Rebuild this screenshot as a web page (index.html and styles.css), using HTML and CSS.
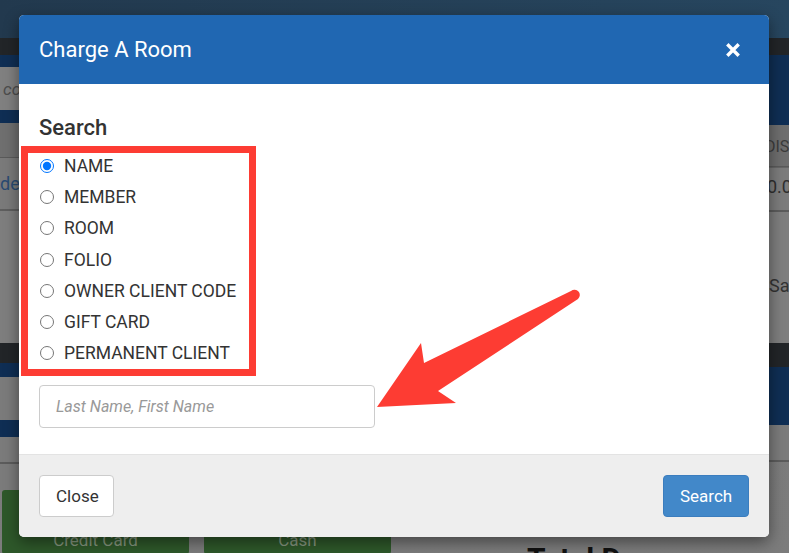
FILE: index.html
```html
<!DOCTYPE html>
<html lang="en">
<head>
<meta charset="utf-8">
<title>Charge A Room</title>
<link rel="stylesheet" href="styles.css">
</head>
<body>
<div class="page">
  <div class="topbar"></div>
  <div class="panels">
    <div class="panel left">
      <div class="bar dark h17"></div>
      <div class="bar blue h12"></div>
      <div class="row-input"><span class="ph">co</span></div>
      <div class="bar blue h13"></div>
      <div class="thead"></div>
      <div class="trow"><span class="link">de</span></div>
      <div class="spacer h132"></div>
      <div class="bar dark h20"></div>
      <div class="bar blue h14"></div>
      <div class="bar gray h43"></div>
      <div class="bar blue h17"></div>
      <div class="bar gray h25 lined"></div>
      <div class="bar gray h26"></div>
      <div class="paybtns">
        <div class="pay">Credit Card</div>
        <div class="pay">Cash</div>
      </div>
    </div>
    <div class="panel right">
      <div class="bar dark h17"></div>
      <div class="bar blue h70"></div>
      <div class="rhead">DISC</div>
      <div class="rrow">0.0</div>
      <div class="rsale">Sal</div>
      <div class="bar dark h24"></div>
      <div class="bar blue h58"></div>
      <div class="bar gray h37 lined"></div>
      <div class="total">Total D</div>
    </div>
  </div>
</div>

<div class="modal">
  <div class="modal-header">
    <h3 class="modal-title">Charge A Room</h3>
    <button class="close" type="button" aria-label="Close">
      <svg width="14" height="14" viewBox="0 0 14 14"><path d="M2.5 2.5 L11.5 11.5 M11.5 2.5 L2.5 11.5" stroke="#fff" stroke-width="3.4" stroke-linecap="square"/></svg>
    </button>
  </div>
  <div class="modal-body">
    <h4 class="search-title">Search</h4>
    <div class="options">
      <label class="opt first"><input type="radio" name="t" checked><span>NAME</span></label>
      <label class="opt"><input type="radio" name="t"><span>MEMBER</span></label>
      <label class="opt"><input type="radio" name="t"><span>ROOM</span></label>
      <label class="opt"><input type="radio" name="t"><span>FOLIO</span></label>
      <label class="opt"><input type="radio" name="t"><span>OWNER CLIENT CODE</span></label>
      <label class="opt"><input type="radio" name="t"><span>GIFT CARD</span></label>
      <label class="opt"><input type="radio" name="t"><span>PERMANENT CLIENT</span></label>
    </div>
    <input class="query" type="text" placeholder="Last Name, First Name">
  </div>
  <div class="modal-footer">
    <button class="btn btn-default" type="button">Close</button>
    <button class="btn btn-primary" type="button">Search</button>
  </div>
</div>

<svg class="arrow" width="789" height="553" viewBox="0 0 789 553">
  <path d="M377 407 L421 343 L424 363 L571 291 A5 5 0 0 1 578 299 L438 391 L456 403 Z" fill="#fd3c33"/>
</svg>
</body>
</html>
```

FILE: styles.css
```css
* { box-sizing: border-box; }
html, body { margin: 0; padding: 0; }
body {
  width: 789px;
  height: 553px;
  overflow: hidden;
  font-family: Roboto, "Liberation Sans", Arial, sans-serif;
  background: #787878;
  position: relative;
}
.page { width: 789px; height: 553px; overflow: hidden; }
.topbar { height: 38px; background: linear-gradient(90deg, #22394e, #27465f); }
.panels { display: grid; grid-template-columns: 395px 1fr; height: 515px; }
.panel { display: flex; flex-direction: column; background: linear-gradient(180deg, #7a7a7a, #7c7c7c); }
.bar { flex: none; }
.dark { background: #222528; }
.blue { background: #0f2e54; }
.gray { background: #7b7b7b; }
.lined { border-bottom: 2px solid #5c5c5c; }
.h12 { height: 12px; } .h13 { height: 13px; } .h14 { height: 14px; } .h17 { height: 17px; }
.h20 { height: 20px; } .h24 { height: 24px; } .h25 { height: 27px; } .h26 { height: 26px; }
.h37 { height: 37px; } .h43 { height: 43px; } .h58 { height: 58px; } .h70 { height: 70px; }
.h132 { height: 132px; }
.spacer { background: #7e7e7e; }
.row-input { height: 43px; background: #808080; padding-left: 3px; display: flex; align-items: center; }
.ph { font-style: italic; color: #4d4d4d; font-size: 17px; }
.thead { height: 35px; background: #6f6f6f; border-bottom: 1px solid #5a5a5a; }
.trow { height: 53px; background: #7a7a7a; border-bottom: 2px solid #5e5e5e; display: flex; align-items: center; }
.link { color: #2a4b72; font-size: 18px; }
.paybtns { display: flex; gap: 15px; padding-left: 2px; margin-top: 0; }
.pay {
  width: 187px; height: 64px; background: #2e582a; border-radius: 3px;
  color: #86967f; font-size: 17px; text-align: center; padding-top: 40px;
}
.right .rhead { height: 42px; background: #6e6e6e; border-bottom: 1px solid #5a5a5a; color: #3c3c3c; font-size: 16px; padding: 12px 0 0 370px; white-space: nowrap; }
.right .rrow { height: 45px; background: #7c7c7c; border-top: 1px solid #666; border-bottom: 2px solid #5c5c5c; color: #2f2f2f; font-size: 18px; padding: 8px 0 0 372px; white-space: nowrap; }
.right .rsale { height: 131px; background: #7e7e7e; color: #333; font-size: 18px; padding: 63px 0 0 374px; white-space: nowrap; }
.total { font-size: 30px; line-height: 34px; font-weight: 700; color: #111; padding: 80px 0 0 132px; white-space: nowrap; }

/* modal */
.modal {
  position: absolute; left: 19px; top: 15px; width: 750px;
  background: #fff; border-radius: 5px; overflow: hidden;
  box-shadow: 0 5px 15px rgba(0,0,0,0.45);
}
.modal-header {
  height: 69px; background: #2067b2; display: flex; align-items: center;
  justify-content: space-between; padding: 0 29px 0 20px;
}
.modal-title { margin: 0; color: #fff; font-weight: 400; font-size: 22px; line-height: 26px; }
.close { border: 0; background: transparent; padding: 0; margin: 0; width: 14px; height: 14px; display: flex; cursor: pointer; }
.modal-body { padding: 32px 20px 26px; }
.search-title { margin: 0; font-size: 22px; line-height: 24px; font-weight: 500; color: #333; }
.options {
  margin: 6px 0 0 -18px; width: 235px; height: 230px;
  border: 7px solid #fd3c33; padding-left: 12px;
}
.opt { display: flex; align-items: center; height: 31.17px; font-size: 17.5px; color: #333; }
.opt.first { margin-top: -2.5px; }
.opt input { margin: 0 10px 0 0; width: 14px; height: 14px; flex: none; }
.query {
  display: block; margin-top: 9px; width: 336px; height: 43px;
  border: 1px solid #ccc; border-radius: 4px; padding: 0 16px;
  font-family: inherit; font-size: 16px; color: #555;
}
.query::placeholder { color: #999; font-style: italic; }
.modal-footer {
  border-top: 1px solid #e3e3e3; background: #eee; padding: 20px;
  display: flex; justify-content: space-between;
}
.btn {
  height: 42px; border-radius: 4px; font-family: inherit; font-size: 17px;
  padding: 0 16px; cursor: pointer;
}
.btn-default { width: 75px; background: #fff; border: 1px solid #ccc; color: #333; }
.btn-primary { width: 86px; background: #4288c9; border: 1px solid #3b7dbe; color: #fff; }
.arrow { position: absolute; left: 0; top: 0; pointer-events: none; }
```
